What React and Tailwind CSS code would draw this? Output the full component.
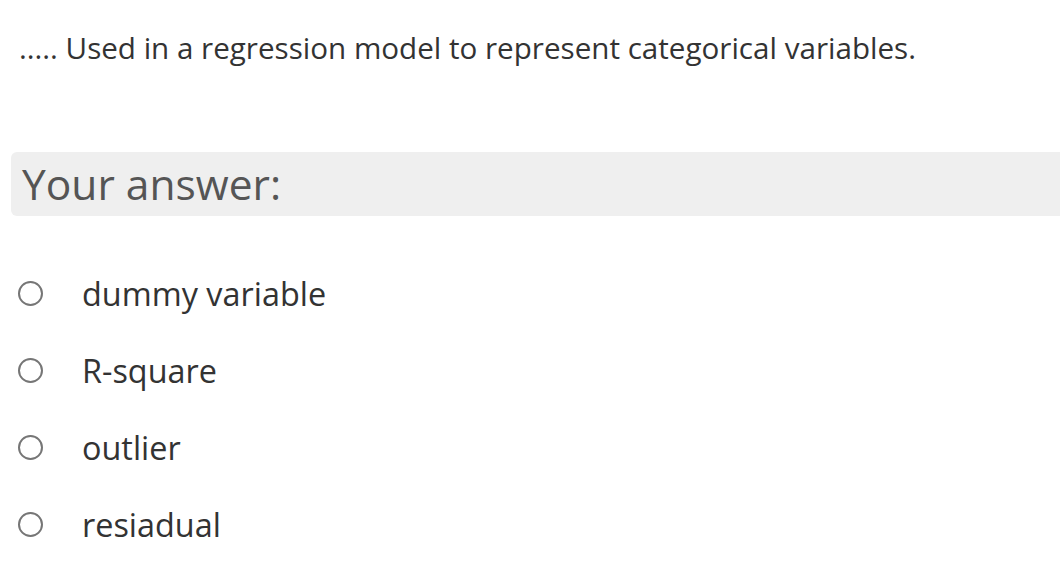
import React from "react";

const options = ["dummy variable", "R-square", "outlier", "resiadual"];

export default function App() {
  return (
    <div
      className="min-h-screen bg-white text-[#333333] overflow-hidden"
      style={{ fontFamily: '"Open Sans", sans-serif' }}
    >
      <p className="pl-[19px] pt-[28px] text-[29.6px] leading-[40px]">
        ..... Used in a regression model to represent categorical variables.
      </p>

      <div className="ml-[11px] mt-[84px] h-[64px] rounded-l-[6px] bg-[#efefef] pl-[11px] flex items-center">
        <span className="text-[42.5px] leading-none text-[#555555]">Your answer:</span>
      </div>

      <div className="mt-[57px] pl-[18px] flex flex-col gap-[37px]">
        {options.map(o => (
          <label key={o} className="flex items-center h-[40px]">
            <span className="w-[25px] h-[25px] rounded-full border-2 border-[#767676] shrink-0" />
            <span className="ml-[39px] text-[32.4px] leading-none">{o}</span>
          </label>
        ))}
      </div>
    </div>
  );
}
